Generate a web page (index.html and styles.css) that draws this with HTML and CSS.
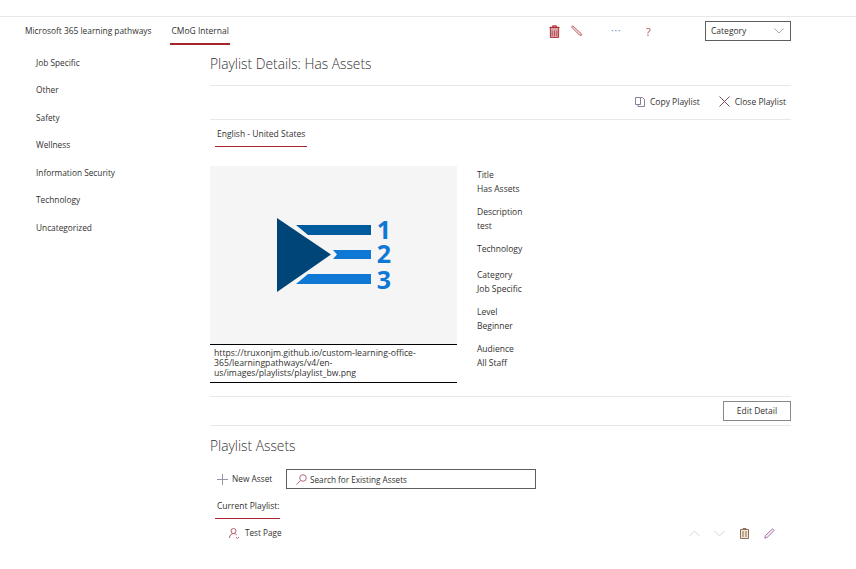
FILE: index.html
```html
<!DOCTYPE html>
<html lang="en">
<head>
<meta charset="utf-8">
<title>Playlist Details</title>
<link rel="stylesheet" href="styles.css">
</head>
<body>
<div class="page">
  <header class="topbar">
    <nav class="tabs">
      <a class="tab first-tab">Microsoft 365 learning pathways</a>
      <a class="tab active">CMoG Internal</a>
    </nav>
    <div class="top-icons">
      <svg class="ic trash" viewBox="0 0 12 14"><path d="M4 2V.8h4V2M.5 2.500h11M1.500 2.500h9V13.500h-9z" fill="#d9a5a9" stroke="#a4262c"/><path d="M3.500 6v6M6 6v6M8.500 6v6" stroke="#a4262c" stroke-width=".7" fill="none"/></svg>
      <svg class="ic pencil" viewBox="0 0 12 12"><path d="M1.800.8 11 9.300l.3 2-2.100-.3L.6 2.300z" fill="#f3dfe0" stroke="#b8555b" stroke-width="1"/></svg>
      <span class="dots">···</span>
      <span class="help">?</span>
    </div>
    <div class="select"><span>Category</span>
      <svg class="chev" viewBox="0 0 10 6"><path d="M.5.500 5 5 9.500.500" fill="none" stroke="#a6a6a6"/></svg>
    </div>
  </header>
  <div class="content">
    <aside class="side">
      <a>Job Specific</a><a>Other</a><a>Safety</a><a>Wellness</a><a>Information Security</a><a>Technology</a><a>Uncategorized</a>
    </aside>
    <main class="main">
      <h1 class="heading first">Playlist Details: Has Assets</h1>
      <div class="toolbar">
        <a class="tool"><svg class="ic-s" viewBox="0 0 10 11"><path d="M.5 1.500h5v7h-5zM3 8.500v2h6.500V3.500l-2-2h-2" fill="none" stroke="#8a7f98"/></svg>Copy Playlist</a>
        <a class="tool"><svg class="ic-x" viewBox="0 0 11 11"><path d="M.5.500 10.500 10.500M10.500.500 .5 10.500" stroke="#7d4a5a" fill="none"/></svg>Close Playlist</a>
      </div>
      <div class="langs"><span class="lang">English - United States</span></div>
      <section class="detail">
        <div class="pic">
          <div class="thumb">
            <svg class="logo" viewBox="0 0 116 76">
              <path d="M20 8H95V18H32z" fill="#005a9e"/>
              <path d="M57 33H95V42H57L61 37.500z" fill="#0f78d4"/>
              <path d="M32 57H95V67H20z" fill="#0f78d4"/>
              <path d="M1 1V75L55 37.500z" fill="#004578"/>
              <text x="108" y="22" class="num">1</text>
              <text x="108" y="46" class="num">2</text>
              <text x="108" y="72" class="num">3</text>
            </svg>
          </div>
          <div class="url">https://truxonjm.github.io/custom-learning-office-365/learningpathways/v4/en-us/images/playlists/playlist_bw.png</div>
        </div>
        <dl class="fields">
          <div class="field"><dt>Title</dt><dd>Has Assets</dd></div>
          <div class="field"><dt>Description</dt><dd>test</dd></div>
          <div class="field empty"><dt>Technology</dt></div>
          <div class="field"><dt>Category</dt><dd>Job Specific</dd></div>
          <div class="field"><dt>Level</dt><dd>Beginner</dd></div>
          <div class="field"><dt>Audience</dt><dd>All Staff</dd></div>
        </dl>
      </section>
      <div class="actions"><button class="btn">Edit Detail</button></div>
      <h2 class="heading">Playlist Assets</h2>
      <div class="asset-bar">
        <a class="new"><svg class="ic-p" viewBox="0 0 11 11"><path d="M5.500 0v11M0 5.500h11" stroke="#9a93a8" fill="none"/></svg>New Asset</a>
        <div class="search"><svg class="ic-m" viewBox="0 0 11 11"><circle cx="7" cy="4" r="3.300" fill="none" stroke="#b06a80"/><path d="M4.700 6.400 .5 10.500" stroke="#b06a80" fill="none"/></svg><span>Search for Existing Assets</span></div>
      </div>
      <div class="current"><span>Current Playlist:</span></div>
      <div class="asset">
        <svg class="ic-u" viewBox="0 0 11 11"><circle cx="4.500" cy="3" r="2.500" fill="none" stroke="#b4606c"/><path d="M.5 10c.3-3 1.700-4.500 4-4.500 1.500 0 2.500.5 3.200 1.700M7 9.500l1.300 1 1.700-1.500" fill="none" stroke="#b4606c"/></svg>
        <span class="asset-name">Test Page</span>
        <div class="asset-tools">
          <svg class="ic-t" viewBox="0 0 11 11"><path d="M.5 8 5.500 3l5 5" fill="none" stroke="#d4d4d4"/></svg>
          <svg class="ic-t" viewBox="0 0 11 11"><path d="M.5 3l5 5 5-5" fill="none" stroke="#d4d4d4"/></svg>
          <svg class="ic-t" viewBox="0 0 11 11"><path d="M4 1.500V.5h3v1M1.500 1.500h8v9h-8z" fill="#f3e6d0" stroke="#8f6d5f"/><path d="M4 3v6M7 3v6" stroke="#8f6d5f" fill="none"/></svg>
          <svg class="ic-t" viewBox="0 0 11 11"><path d="M.8 10.200 1.500 7.500 8.500.8l1.700 1.700-7 6.900z" fill="#f5eaf5" stroke="#a678a8"/></svg>
        </div>
      </div>
    </main>
  </div>
</div>
</body>
</html>
```
FILE: styles.css
```css
* { box-sizing: border-box; }
html, body { margin: 0; padding: 0; background: #fff; }
body {
  font-family: "Open Sans", "Liberation Sans", sans-serif;
  font-size: 8.5px;
  line-height: 14px;
  color: #323130;
  overflow: hidden;
}
.page { width: 856px; height: 569px; padding-top: 16px; }
.topbar {
  display: flex;
  align-items: flex-start;
  border-top: 1px solid #e8e8e8;
  width: 856px;
  height: 29px;
  padding-right: 65px;
}
.tabs { display: flex; padding-left: 25px; width: 545px; gap: 18px; }
.tab { height: 28px; line-height: 27px; padding: 0 1px 0 0; white-space: nowrap; }
.first-tab { font-size: 8.350px; }
.tab.active { border-bottom: 2px solid #a4262c; padding: 0 1px; }
.top-icons { display: flex; align-items: center; height: 28px; width: 160px; }
.ic { display: block; flex: none; }
.trash { width: 11px; height: 13px; margin-left: 4px; margin-top: 1px; }
.pencil { width: 11px; height: 11px; margin-left: 11px; margin-top: -1px; }
.dots { width: 12px; margin-left: 28px; color: #6f8fb5; font-size: 11px; text-align: center; letter-spacing: .5px; margin-top: -3px; }
.help { margin-left: 24px; color: #b8555b; font-size: 11px; margin-top: 1px; }
.select {
  display: flex;
  align-items: center;
  justify-content: space-between;
  flex: none;
  width: 86px;
  height: 20px;
  margin-top: 4px;
  padding: 0 5px;
  border: 1px solid #605e5c;
}
.chev { width: 10px; height: 6px; margin-right: 1px; }
.content { display: flex; }
.side { width: 210px; flex: none; padding: 10.500px 0 0 36px; display: flex; flex-direction: column; gap: 13.500px; font-size: 8.300px; }
.side a { display: block; height: 14px; }
.main { width: 581px; flex: none; }
.heading { margin: 0; font-size: 13.800px; font-weight: 300; line-height: 20px; color: #323130; }
.first { height: 41px; padding-top: 9px; border-bottom: 1px solid #e8e8e8; }
.toolbar { display: flex; justify-content: flex-end; align-items: center; gap: 19px; height: 34px; border-bottom: 1px solid #e8e8e8; padding: 0 5px 2px 0; }
.tool { display: flex; align-items: center; gap: 5px; }
.ic-s { width: 10px; height: 11px; }
.ic-x { width: 11px; height: 11px; }
.langs { display: flex; padding-left: 5px; height: 27px; }
.lang { display: block; width: 92px; height: 27px; padding-left: 2px; line-height: 28px; border-bottom: 1px solid #a4262c; font-size: 8.500px; white-space: nowrap; }
.detail { display: flex; padding-top: 19px; height: 250px; border-bottom: 1px solid #e8e8e8; }
.pic { width: 247px; flex: none; }
.thumb { height: 178px; background: #f5f5f5; display: flex; align-items: center; justify-content: center; }
.logo { width: 116px; height: 76px; overflow: visible; margin-top: -1px; margin-left: 1px; }
.num { font-size: 25px; font-weight: 700; fill: #0f78d4; font-family: "Open Sans", sans-serif; text-anchor: middle; }
.url { height: 39px; border-top: 1px solid #000; border-bottom: 1px solid #000; padding: 3px 4px 0; line-height: 10px; font-size: 8.700px; }
.fields { margin: 0 0 0 20px; display: flex; flex-direction: column; padding-top: 2px; gap: 9px; }
.field { height: 28px; }
.field.empty { height: 17px; }
.field dt, .field dd { margin: 0; line-height: 14px; }
.actions { display: flex; justify-content: flex-end; align-items: center; height: 29px; border-bottom: 1px solid #e8e8e8; }
.btn { width: 68px; height: 20px; padding: 0; border: 1px solid #8a8886; background: #fff; color: #323130; font: inherit; }
h2.heading { margin-top: 10px; }
.asset-bar { display: flex; align-items: center; margin-top: 13px; padding-left: 7px; height: 20px; }
.new { display: flex; align-items: center; gap: 4px; width: 69px; white-space: nowrap; font-size: 8.300px; }
.ic-p { width: 11px; height: 11px; }
.search { width: 250px; height: 20px; display: flex; align-items: center; gap: 3px; padding: 1px 0 0 9px; border: 1px solid #605e5c; font-size: 8.200px; }
.ic-m { width: 11px; height: 11px; }
.current { margin-top: 10px; padding-left: 5px; }
.current span { display: block; width: 65px; height: 20px; padding-left: 2px; white-space: nowrap; border-bottom: 1px solid #a4262c; }
.asset { display: flex; align-items: center; margin-top: 7px; padding-left: 19px; height: 14px; }
.ic-u { width: 11px; height: 11px; }
.asset-name { margin-left: 5px; font-size: 8.200px; }
.asset-tools { display: flex; gap: 14px; margin-left: auto; margin-right: 16px; }
.ic-t { width: 11px; height: 11px; }
```
